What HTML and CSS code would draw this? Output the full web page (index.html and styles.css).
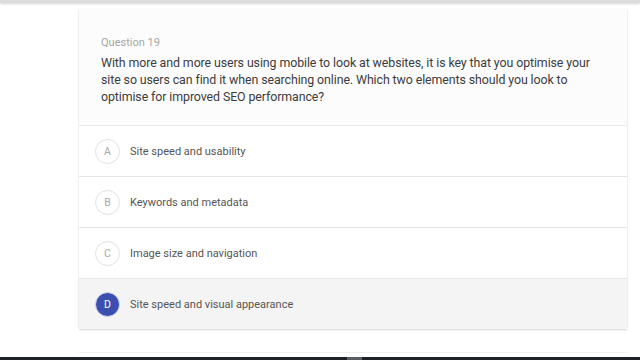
FILE: index.html
```html
<!DOCTYPE html>
<html lang="en">
<head>
    <meta charset="UTF-8">
    <meta name="viewport" content="width=device-width, initial-scale=1.0">
    <title>Question 19</title>
    <link rel="stylesheet" href="styles.css">
</head>
<body>
    <div class="topbar"></div>

    <main class="page">
        <section class="card">
            <div class="question">
                <p class="question-label">Question 19</p>
                <p class="question-text">With more and more users using mobile to look at websites, it is key that you optimise your site so users can find it when searching online. Which two elements should you look to optimise for improved SEO performance?</p>
            </div>

            <div class="option">
                <span class="letter">A</span>
                <span class="option-text">Site speed and usability</span>
            </div>
            <div class="option">
                <span class="letter">B</span>
                <span class="option-text">Keywords and metadata</span>
            </div>
            <div class="option">
                <span class="letter">C</span>
                <span class="option-text">Image size and navigation</span>
            </div>
            <div class="option selected">
                <span class="letter">D</span>
                <span class="option-text">Site speed and visual appearance</span>
            </div>
        </section>

        <div class="next-card"></div>
    </main>

    <div class="taskbar">
        <span class="task"></span>
    </div>
</body>
</html>
```

FILE: styles.css
```css
body {
    margin: 0;
    background: #fff;
    font-family: Roboto, "Liberation Sans", Arial, sans-serif;
    color: #424242;
    height: 360px;
    overflow: hidden;
    display: flex;
    flex-direction: column;
}

.topbar {
    flex: none;
    height: 3px;
    background: #dcdcdc;
    box-shadow: 0 1px 3px rgba(0, 0, 0, 0.18);
}

.page {
    flex: 1 1 0;
    min-height: 0;
    overflow: hidden;
    padding: 6px 0 0 79px;
}

.card {
    width: 548px;
    background: #fff;
    box-shadow: 0 1px 2px rgba(0, 0, 0, 0.16), 0 0 1px rgba(0, 0, 0, 0.06);
}

.question {
    background: #fcfcfc;
    padding: 27px 22px 20px;
    border-bottom: 1px solid #ececec;
}

.question-label {
    margin: 0 0 4px;
    font-size: 11px;
    line-height: 14px;
    color: #a6a6a6;
}

.question-text {
    margin: 0;
    font-size: 12.4px;
    letter-spacing: -0.1px;
    line-height: 17px;
    color: #3c3c3c;
}

.option {
    display: flex;
    align-items: center;
    gap: 10px;
    height: 50px;
    padding-left: 16px;
    border-bottom: 1px solid #e6e6e6;
    font-size: 11px;
    color: #555;
}

.option:last-child {
    border-bottom: none;
}

.option.selected {
    background: #f4f4f4;
}

.letter {
    width: 23px;
    height: 23px;
    border: 1.5px solid #e2e2e2;
    border-radius: 50%;
    display: flex;
    align-items: center;
    justify-content: center;
    font-size: 10.5px;
    color: #a9a9a9;
    background: #fff;
}

.selected .letter {
    background: #3c4fb0;
    border-color: #d6dcf2;
    color: #fff;
}

.next-card {
    width: 548px;
    height: 4px;
    margin-top: 23px;
    border-top: 1px solid #f0f0f0;
}

.taskbar {
    flex: none;
    height: 3px;
    background: #1e2228;
    position: relative;
}

.task {
    position: absolute;
    left: 347px;
    top: 0;
    width: 15px;
    height: 3px;
    background: #5a5e64;
}
```
